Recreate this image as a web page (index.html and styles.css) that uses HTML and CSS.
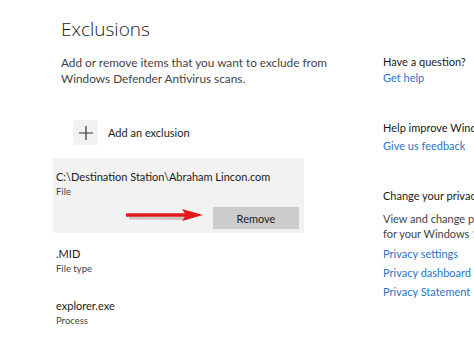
FILE: index.html
```html
<!DOCTYPE html>
<html lang="en">
<head>
    <meta charset="UTF-8">
    <meta name="viewport" content="width=device-width, initial-scale=1.0">
    <title>Exclusions</title>
    <link rel="stylesheet" href="styles.css">
</head>
<body>
    <div class="page">
        <div class="main">
            <h1>Exclusions</h1>
            <p class="intro">Add or remove items that you want to exclude from<br>Windows Defender Antivirus scans.</p>

            <div class="add-row">
                <div class="add-box">
                    <svg width="14" height="14" viewBox="0 0 14 14">
                        <path d="M7 0 V14 M0 7 H14" stroke="#333" stroke-width="1.2" fill="none"/>
                    </svg>
                </div>
                <span>Add an exclusion</span>
            </div>

            <div class="item selected">
                <div class="item-name">C:\Destination Station\Abraham Lincon.com</div>
                <div class="item-type">File</div>
                <div class="item-actions">
                    <svg class="arrow" width="78" height="14" viewBox="0 0 78 14">
                        <path d="M3 9 L62 9.5" stroke="#8a7070" stroke-width="3" opacity="0.35"/>
                        <path d="M1 6 L62 6" stroke="#e3191b" stroke-width="3.5" stroke-linecap="round"/>
                        <path d="M56 0 L77 6 L56 12 L60 6 Z" fill="#e3191b"/>
                    </svg>
                    <button class="remove-btn">Remove</button>
                </div>
            </div>

            <div class="item">
                <div class="item-name">.MID</div>
                <div class="item-type">File type</div>
            </div>

            <div class="item">
                <div class="item-name">explorer.exe</div>
                <div class="item-type">Process</div>
            </div>
        </div>

        <div class="side">
            <div class="side-group">
                <h3>Have a question?</h3>
                <a href="#">Get help</a>
            </div>
            <div class="side-group">
                <h3>Help improve Windows Defender</h3>
                <a href="#" class="spaced">Give us feedback</a>
            </div>
            <div class="side-group">
                <h3>Change your privacy settings</h3>
                <p>View and change privacy settings<br>for your Windows 10 device.</p>
                <a href="#" class="tall">Privacy settings</a>
                <a href="#" class="tall">Privacy dashboard</a>
                <a href="#" class="tall">Privacy Statement</a>
            </div>
        </div>
    </div>
</body>
</html>
```

FILE: styles.css
```css
body {
    margin: 0;
    background-color: #fff;
    font-family: 'Lato', 'Open Sans', sans-serif;
    color: #1a1a1a;
    overflow: hidden;
}

.page {
    display: flex;
    width: 474px;
    height: 351px;
    overflow: hidden;
}

.main {
    width: 330px;
    flex-shrink: 0;
    padding-left: 53px;
}

h1 {
    margin: 14px 0 0 8px;
    font-family: 'Open Sans', sans-serif;
    font-size: 19px;
    font-weight: 300;
    line-height: 30px;
    color: #1a1a1a;
}

.intro {
    margin: 11px 0 0 8px;
    font-size: 11.8px;
    line-height: 16px;
    color: #444;
}

.add-row {
    display: flex;
    align-items: center;
    gap: 10px;
    margin: 33px 0 0 20px;
    font-size: 11px;
    color: #222;
}

.add-box {
    width: 25px;
    height: 25px;
    background-color: #f2f2f2;
    display: flex;
    align-items: center;
    justify-content: center;
}

.item {
    width: 248px;
    padding: 13px 0 0 3px;
    height: 39px;
}

.item.selected {
    margin-top: 13px;
    padding-top: 11px;
    height: 64px;
    background-color: #f2f2f2;
}

.item-name {
    font-size: 11px;
    line-height: 16px;
    color: #1a1a1a;
}

.item-type {
    font-size: 9.5px;
    line-height: 14px;
    color: #444;
}

.item-actions {
    display: flex;
    justify-content: flex-end;
    align-items: flex-start;
    gap: 9px;
    margin-top: 8px;
    padding-right: 5px;
}

.arrow {
    margin-top: 2px;
}

.remove-btn {
    width: 86px;
    height: 22px;
    border: none;
    background-color: #cccccc;
    font-family: inherit;
    font-size: 11px;
    color: #222;
}

.side {
    padding-top: 54px;
    white-space: nowrap;
}

.side-group + .side-group {
    margin-top: 35px;
}

.side h3 {
    margin: 0;
    font-size: 11px;
    font-weight: normal;
    line-height: 16px;
    color: #1a1a1a;
}

.side p {
    margin: 7px 0 3px;
    font-size: 11px;
    line-height: 15px;
    color: #444;
}

.side a {
    display: block;
    font-size: 11px;
    line-height: 15px;
    color: #2b73c4;
    text-decoration: none;
}

.side a.spaced {
    margin-top: 2px;
}

.side a.tall {
    line-height: 19px;
}
```
